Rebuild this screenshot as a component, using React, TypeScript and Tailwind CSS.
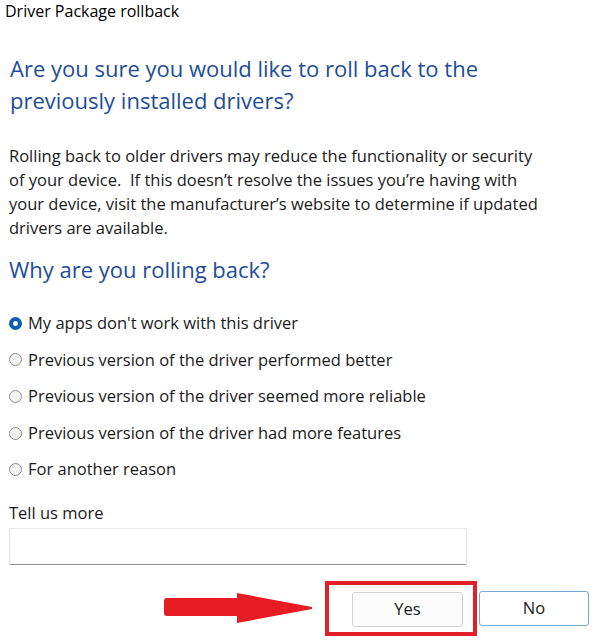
const reasons = [
  "My apps don't work with this driver",
  'Previous version of the driver performed better',
  'Previous version of the driver seemed more reliable',
  'Previous version of the driver had more features',
  'For another reason',
];

function Radio({ checked }: { checked: boolean }) {
  if (checked) {
    return <span className="block h-[13px] w-[13px] shrink-0 rounded-full border-[4px] border-[#0a5fb0] bg-white" />;
  }
  return <span className="block h-[13px] w-[13px] shrink-0 rounded-full border border-[#8e8e8e] bg-[#f3f3f3]" />;
}

function Arrow() {
  return (
    <svg width="150" height="32" viewBox="0 0 150 32" className="shrink-0">
      <path
        d="M3 5 L73 5 L73 0 L148 14 L148 16 L73 30 L73 23 L3 23 Q0 23 0 20 L0 8 Q0 5 3 5 Z"
        fill="#e61c24"
      />
    </svg>
  );
}

export default function App() {
  return (
    <div className="h-[640px] w-[598px] overflow-hidden bg-white font-['Open_Sans',sans-serif] text-[#1a1a1a]">
      <div className="pl-[5px] pt-[1px] text-[16px] leading-[20px] text-black">Driver Package rollback</div>

      <h1 className="ml-[10px] mt-[31px] w-[520px] text-[22px] leading-[32px] text-[#1d4d98]">
        Are you sure you would like to roll back to the previously installed drivers?
      </h1>

      <p className="ml-[9px] mt-[28px] w-[535px] text-[16.5px] leading-[24px]">
        Rolling back to older drivers may reduce the functionality or security of your device.&nbsp; If this doesn’t
        resolve the issues you’re having with your device, visit the manufacturer’s website to determine if updated
        drivers are available.
      </p>

      <h2 className="ml-[9px] mt-[13px] text-[22px] leading-[32px] text-[#1d4d98]">Why are you rolling back?</h2>

      <div className="mt-[20px] flex flex-col">
        {reasons.map((r, i) => (
          <label key={r} className="flex h-[36.6px] items-center gap-[6px] pl-[9px] text-[16.5px]">
            <Radio checked={i === 0} />
            <span>{r}</span>
          </label>
        ))}
      </div>

      <div className="ml-[9px] mt-[15px] text-[16.5px] leading-[20px]">Tell us more</div>
      <div className="ml-[9px] mt-[5px] h-[37px] w-[458px] rounded-[2px] border border-[#e3e3e3] border-b-[#8a8a8a] bg-white" />

      <div className="mt-[16px] flex items-center">
        <div className="ml-[164px] mt-[1px]">
          <Arrow />
        </div>
        <div className="ml-[11px] flex h-[55px] w-[152px] items-start border-[4px] border-[#e2202a] pl-[23px] pt-[7px]">
          <button className="h-[35px] w-[111px] rounded-[3px] border border-[#d2d2d2] bg-[#fcfcfc] text-[16.5px]">
            Yes
          </button>
        </div>
        <button className="ml-[2px] h-[35px] w-[110px] rounded-[3px] border border-[#78a8d8] bg-white text-[16.5px]">
          No
        </button>
      </div>
    </div>
  );
}
